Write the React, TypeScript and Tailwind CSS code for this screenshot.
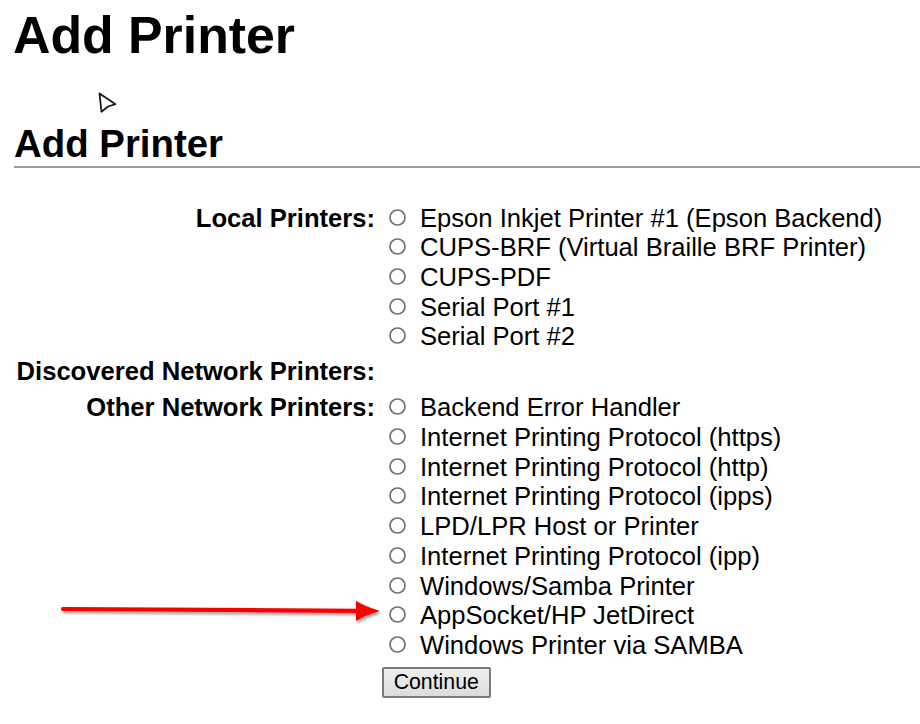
import React from 'react';

const localPrinters = [
  'Epson Inkjet Printer #1 (Epson Backend)',
  'CUPS-BRF (Virtual Braille BRF Printer)',
  'CUPS-PDF',
  'Serial Port #1',
  'Serial Port #2',
];

const otherPrinters = [
  'Backend Error Handler',
  'Internet Printing Protocol (https)',
  'Internet Printing Protocol (http)',
  'Internet Printing Protocol (ipps)',
  'LPD/LPR Host or Printer',
  'Internet Printing Protocol (ipp)',
  'Windows/Samba Printer',
  'AppSocket/HP JetDirect',
  'Windows Printer via SAMBA',
];

const Radio = () => (
  <svg className="ml-[6.5px] mt-[5px] shrink-0" width="17" height="17" viewBox="0 0 17 17">
    <circle cx="8.5" cy="8.5" r="7.5" fill="#fff" stroke="#707070" strokeWidth="1.7" />
  </svg>
);

const Option: React.FC<{ label: string; h: string }> = ({ label, h }) => (
  <div className={`flex items-start ${h}`}>
    <Radio />
    <span className="ml-[14.5px] whitespace-nowrap">{label}</span>
  </div>
);

const Section: React.FC<{ title: string; items: string[]; h: string; className?: string }> = ({
  title,
  items,
  h,
  className = '',
}) => (
  <div className={`flex ${className}`}>
    <div className={`w-[361px] shrink-0 text-right font-bold whitespace-nowrap ${h}`}>{title}</div>
    <div className="ml-[7px] flex flex-col">
      {items.map((item) => (
        <Option key={item} label={item} h={h} />
      ))}
    </div>
  </div>
);

export default function App() {
  return (
    <div
      className="relative h-[724px] w-[920px] overflow-hidden bg-white pl-[14px] pt-[5.5px] text-black"
      style={{ fontFamily: '"Liberation Sans", Arial, sans-serif' }}
    >
      <h1 className="-ml-[1px] text-[51.8px] font-bold leading-[59px]">Add Printer</h1>
      <h2 className="mt-[57px] text-[38.4px] font-bold leading-[44px]">Add Printer</h2>
      <div className="mt-[0.6px] h-[1.5px] bg-[#9d9d9d]" />

      <div className="mt-[36px] text-[25.6px] leading-[29.7px]">
        <Section title="Local Printers:" items={localPrinters} h="h-[29.7px]" />
        <div className="mt-[5px] flex h-[29.7px]">
          <div className="w-[361px] shrink-0 text-right font-bold whitespace-nowrap">
            Discovered Network Printers:
          </div>
        </div>
        <Section
          title="Other Network Printers:"
          items={otherPrinters}
          h="h-[29.75px]"
          className="mt-[6.3px] leading-[29.75px]"
        />
        <div className="ml-[368px] mt-[6.3px]">
          <button className="flex h-[31px] w-[108.5px] items-center justify-center rounded-[2px] border-2 border-[#7a7a7a] bg-gradient-to-b from-[#efefef] to-[#dcdcdc] text-[21.3px] leading-none text-black">
            Continue
          </button>
        </div>
      </div>

      {/* annotation arrow */}
      <svg className="absolute left-0 top-0" width="920" height="724" viewBox="0 0 920 724">
        <defs>
          <filter id="sh" x="-5%" y="-50%" width="110%" height="300%">
            <feDropShadow dx="1.5" dy="2.5" stdDeviation="1.2" floodColor="#000" floodOpacity="0.35" />
          </filter>
        </defs>
        <g filter="url(#sh)">
          <line x1="63" y1="609" x2="360" y2="610.8" stroke="#f60000" strokeWidth="4.2" strokeLinecap="round" />
          <path d="M356.5 601.5 Q363 606 378.5 611 Q363 615.5 356.5 620.5 Z" fill="#f60000" stroke="#f60000" strokeWidth="1" strokeLinejoin="round" />
        </g>
      </svg>

      {/* mouse pointer */}
      <svg className="absolute left-0 top-0" width="130" height="130" viewBox="0 0 130 130">
        <path
          d="M99.5 93.5 L115.5 104.2 L108 106.5 L101.5 111.8 Z"
          fill="#fff"
          stroke="#1a1a1a"
          strokeWidth="1.8"
          strokeLinejoin="round"
        />
      </svg>
    </div>
  );
}
